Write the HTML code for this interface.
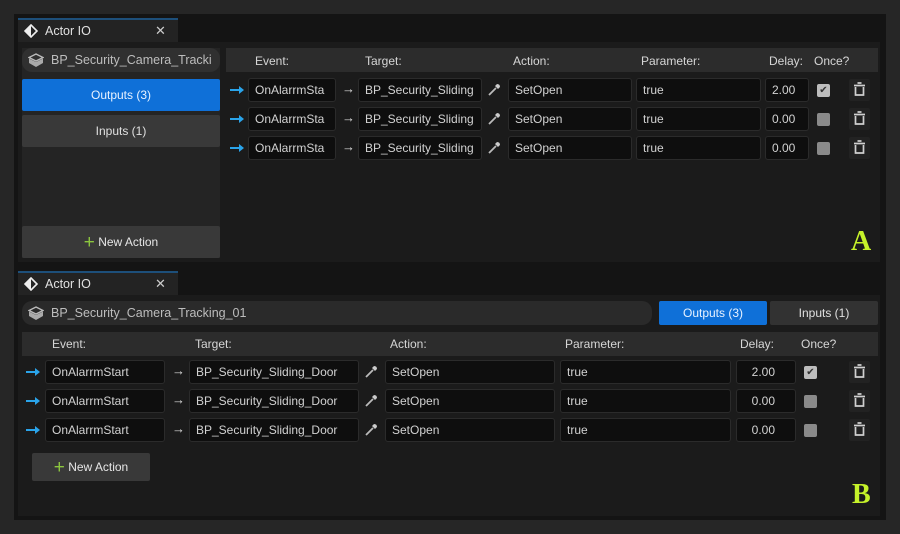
<!DOCTYPE html>
<html><head><meta charset="utf-8"><style>
*{margin:0;padding:0;box-sizing:border-box}
body{width:900px;height:534px;background:#262626;font-family:"Liberation Sans",sans-serif;position:relative;overflow:hidden;color:#d4d4d4}
.a{position:absolute}
.frame{left:14px;top:14px;width:872px;height:506px;background:#141414}
.tab{height:24px;width:160px;background:#232323;border-top:2px solid #1d4f7a;font-size:12.5px;color:#e0e0e0;line-height:22px;padding-left:27px}
.tab .x{position:absolute;left:137px;top:0;font-size:13px;color:#ccc}
.tab svg{position:absolute;left:6px;top:4px}
.panel{background:#1b1b1b}
.box{position:absolute;height:24px;background:#0e0e0e;border:1px solid #2b2b2b;border-radius:3px;color:#d2d2d2;font-size:12px;line-height:22px;padding-left:6px;white-space:nowrap;overflow:hidden}
.hdr{position:absolute;font-size:12px;color:#d6d6d6}
.btn{position:absolute;font-size:12px;text-align:center;border-radius:2px}
.chk{position:absolute;width:13px;height:13px;background:#8a8a8a;border-radius:2px}
.trash{position:absolute;width:21px;height:22px;background:#222;border-radius:2px}
.letter{position:absolute;font-family:"Liberation Serif",serif;font-weight:bold;font-size:28px;color:#c6f22a}
</style></head><body>
<div class="a frame"></div>

<!-- PANEL A -->
<div class="a tab" style="left:18px;top:18px">
<svg width="14" height="14" viewBox="0 0 14 14"><path d="M7 1L13 7L7 13L1 7Z" fill="none" stroke="#eee" stroke-width="1.6"/><path d="M7 1L1 7L7 13Z" fill="#eee"/></svg>Actor IO<span class="x">✕</span></div>
<div class="a panel" style="left:18px;top:42px;width:862px;height:220px"></div>
<div class="a" style="left:22px;top:48px;width:198px;height:210px;background:#242424"></div>
<div class="a" style="left:22px;top:48px;width:198px;height:24px;background:#303030;border-radius:10px;font-size:12.5px;color:#bdbdbd;line-height:24px;padding-left:29px;white-space:nowrap;overflow:hidden">BP_Security_Camera_Tracki</div>
<svg class="a" style="left:28px;top:53px" width="16" height="15" viewBox="0 0 16 15"><path d="M8 1L15 4.5L8 8L1 4.5Z" fill="none" stroke="#bbb" stroke-width="1.4"/><path d="M1 5.5V10L8 14V9Z M15 5.5V10L8 14V9Z" fill="#aaa"/></svg>
<div class="btn" style="left:22px;top:79px;width:198px;height:32px;line-height:32px;background:#0f70d8;color:#e8f2ff">Outputs (3)</div>
<div class="btn" style="left:22px;top:115px;width:198px;height:32px;line-height:32px;background:#393939;color:#e0e0e0">Inputs (1)</div>
<div class="btn" style="left:22px;top:226px;width:198px;height:32px;line-height:32px;background:#393939;color:#e6e6e6"><span style="color:#8cc63f;font-size:19px;vertical-align:-2px">+</span> New Action</div>

<div class="a" style="left:226px;top:48px;width:652px;height:24px;background:#2c2c2c"></div>
<div class="hdr" style="left:255px;top:54px">Event:</div>
<div class="hdr" style="left:365px;top:54px">Target:</div>
<div class="hdr" style="left:513px;top:54px">Action:</div>
<div class="hdr" style="left:641px;top:54px">Parameter:</div>
<div class="hdr" style="left:769px;top:54px">Delay:</div>
<div class="hdr" style="left:814px;top:54px">Once?</div>

<!-- rows A -->
<div id="ra"></div>

<div class="letter" style="left:851px;top:226px">A</div>

<!-- PANEL B -->
<div class="a tab" style="left:18px;top:271px">
<svg width="14" height="14" viewBox="0 0 14 14"><path d="M7 1L13 7L7 13L1 7Z" fill="none" stroke="#eee" stroke-width="1.6"/><path d="M7 1L1 7L7 13Z" fill="#eee"/></svg>Actor IO<span class="x">✕</span></div>
<div class="a panel" style="left:18px;top:295px;width:862px;height:221px"></div>
<div class="a" style="left:22px;top:301px;width:630px;height:24px;background:#2a2a2a;border-radius:10px;font-size:12.5px;color:#bdbdbd;line-height:24px;padding-left:29px">BP_Security_Camera_Tracking_01</div>
<svg class="a" style="left:28px;top:306px" width="16" height="15" viewBox="0 0 16 15"><path d="M8 1L15 4.5L8 8L1 4.5Z" fill="none" stroke="#bbb" stroke-width="1.4"/><path d="M1 5.5V10L8 14V9Z M15 5.5V10L8 14V9Z" fill="#aaa"/></svg>
<div class="btn" style="left:659px;top:301px;width:108px;height:24px;line-height:24px;background:#0f70d8;color:#e8f2ff">Outputs (3)</div>
<div class="btn" style="left:770px;top:301px;width:108px;height:24px;line-height:24px;background:#323232;color:#e0e0e0">Inputs (1)</div>
<div class="a" style="left:22px;top:332px;width:856px;height:24px;background:#2c2c2c"></div>
<div class="hdr" style="left:52px;top:337px">Event:</div>
<div class="hdr" style="left:195px;top:337px">Target:</div>
<div class="hdr" style="left:390px;top:337px">Action:</div>
<div class="hdr" style="left:565px;top:337px">Parameter:</div>
<div class="hdr" style="left:740px;top:337px">Delay:</div>
<div class="hdr" style="left:801px;top:337px">Once?</div>
<div id="rb"></div>
<div class="btn" style="left:32px;top:453px;width:118px;height:28px;line-height:28px;background:#393939;color:#e6e6e6"><span style="color:#8cc63f;font-size:19px;vertical-align:-2px">+</span> New Action</div>
<div class="letter" style="left:852px;top:479px">B</div>

<!-- Rows A -->
<div class="a" style="left:0;top:78px">
 <svg class="a" style="left:230px;top:7px" width="15" height="10"><path d="M0 5H11" stroke="#2aa4ea" stroke-width="2"/><path d="M9 1L14 5L9 9Z" fill="#2aa4ea"/></svg>
 <div class="box" style="left:248px;width:88px">OnAlarrmSta</div>
 <div class="a" style="left:342px;top:3px;font-size:13px;color:#ddd">→</div>
 <div class="box" style="left:358px;width:124px">BP_Security_Sliding</div>
 <svg class="a" style="left:487px;top:5px" width="14" height="14"><path d="M2 12L9 5" stroke="#bbb" stroke-width="1.8"/><path d="M8 3L11 6L13 4Q13 1 10 1Z" fill="#ccc"/></svg>
 <div class="box" style="left:508px;width:124px">SetOpen</div>
 <div class="box" style="left:636px;width:125px">true</div>
 <div class="box" style="left:765px;width:44px">2.00</div>
 <div class="chk" style="left:817px;top:6px;background:#bdbdbd;color:#333;font-size:10px;line-height:13px;text-align:center">✔</div>
 <div class="trash" style="left:849px;top:1px"><svg width="21" height="22"><path d="M8.5 4H12.5M5 6.5H16M6.5 8V16H14.5V8" fill="none" stroke="#d0d0d0" stroke-width="1.7"/></svg></div>
</div>
<div class="a" style="left:0;top:107px">
 <svg class="a" style="left:230px;top:7px" width="15" height="10"><path d="M0 5H11" stroke="#2aa4ea" stroke-width="2"/><path d="M9 1L14 5L9 9Z" fill="#2aa4ea"/></svg>
 <div class="box" style="left:248px;width:88px">OnAlarrmSta</div>
 <div class="a" style="left:342px;top:3px;font-size:13px;color:#ddd">→</div>
 <div class="box" style="left:358px;width:124px">BP_Security_Sliding</div>
 <svg class="a" style="left:487px;top:5px" width="14" height="14"><path d="M2 12L9 5" stroke="#bbb" stroke-width="1.8"/><path d="M8 3L11 6L13 4Q13 1 10 1Z" fill="#ccc"/></svg>
 <div class="box" style="left:508px;width:124px">SetOpen</div>
 <div class="box" style="left:636px;width:125px">true</div>
 <div class="box" style="left:765px;width:44px">0.00</div>
 <div class="chk" style="left:817px;top:6px"></div>
 <div class="trash" style="left:849px;top:1px"><svg width="21" height="22"><path d="M8.5 4H12.5M5 6.5H16M6.5 8V16H14.5V8" fill="none" stroke="#d0d0d0" stroke-width="1.7"/></svg></div>
</div>
<div class="a" style="left:0;top:136px">
 <svg class="a" style="left:230px;top:7px" width="15" height="10"><path d="M0 5H11" stroke="#2aa4ea" stroke-width="2"/><path d="M9 1L14 5L9 9Z" fill="#2aa4ea"/></svg>
 <div class="box" style="left:248px;width:88px">OnAlarrmSta</div>
 <div class="a" style="left:342px;top:3px;font-size:13px;color:#ddd">→</div>
 <div class="box" style="left:358px;width:124px">BP_Security_Sliding</div>
 <svg class="a" style="left:487px;top:5px" width="14" height="14"><path d="M2 12L9 5" stroke="#bbb" stroke-width="1.8"/><path d="M8 3L11 6L13 4Q13 1 10 1Z" fill="#ccc"/></svg>
 <div class="box" style="left:508px;width:124px">SetOpen</div>
 <div class="box" style="left:636px;width:125px">true</div>
 <div class="box" style="left:765px;width:44px">0.00</div>
 <div class="chk" style="left:817px;top:6px"></div>
 <div class="trash" style="left:849px;top:1px"><svg width="21" height="22"><path d="M8.5 4H12.5M5 6.5H16M6.5 8V16H14.5V8" fill="none" stroke="#d0d0d0" stroke-width="1.7"/></svg></div>
</div>

<!-- Rows B -->
<div class="a" style="left:0;top:360px">
 <svg class="a" style="left:26px;top:7px" width="15" height="10"><path d="M0 5H11" stroke="#2aa4ea" stroke-width="2"/><path d="M9 1L14 5L9 9Z" fill="#2aa4ea"/></svg>
 <div class="box" style="left:45px;width:120px">OnAlarrmStart</div>
 <div class="a" style="left:172px;top:3px;font-size:13px;color:#ddd">→</div>
 <div class="box" style="left:189px;width:170px">BP_Security_Sliding_Door</div>
 <svg class="a" style="left:364px;top:5px" width="14" height="14"><path d="M2 12L9 5" stroke="#bbb" stroke-width="1.8"/><path d="M8 3L11 6L13 4Q13 1 10 1Z" fill="#ccc"/></svg>
 <div class="box" style="left:385px;width:170px">SetOpen</div>
 <div class="box" style="left:560px;width:171px">true</div>
 <div class="box" style="left:736px;width:60px;text-align:right;padding-right:20px">2.00</div>
 <div class="chk" style="left:804px;top:6px;background:#bdbdbd;color:#333;font-size:10px;line-height:13px;text-align:center">✔</div>
 <div class="trash" style="left:849px;top:1px"><svg width="21" height="22"><path d="M8.5 4H12.5M5 6.5H16M6.5 8V16H14.5V8" fill="none" stroke="#d0d0d0" stroke-width="1.7"/></svg></div>
</div>
<div class="a" style="left:0;top:389px">
 <svg class="a" style="left:26px;top:7px" width="15" height="10"><path d="M0 5H11" stroke="#2aa4ea" stroke-width="2"/><path d="M9 1L14 5L9 9Z" fill="#2aa4ea"/></svg>
 <div class="box" style="left:45px;width:120px">OnAlarrmStart</div>
 <div class="a" style="left:172px;top:3px;font-size:13px;color:#ddd">→</div>
 <div class="box" style="left:189px;width:170px">BP_Security_Sliding_Door</div>
 <svg class="a" style="left:364px;top:5px" width="14" height="14"><path d="M2 12L9 5" stroke="#bbb" stroke-width="1.8"/><path d="M8 3L11 6L13 4Q13 1 10 1Z" fill="#ccc"/></svg>
 <div class="box" style="left:385px;width:170px">SetOpen</div>
 <div class="box" style="left:560px;width:171px">true</div>
 <div class="box" style="left:736px;width:60px;text-align:right;padding-right:20px">0.00</div>
 <div class="chk" style="left:804px;top:6px"></div>
 <div class="trash" style="left:849px;top:1px"><svg width="21" height="22"><path d="M8.5 4H12.5M5 6.5H16M6.5 8V16H14.5V8" fill="none" stroke="#d0d0d0" stroke-width="1.7"/></svg></div>
</div>
<div class="a" style="left:0;top:418px">
 <svg class="a" style="left:26px;top:7px" width="15" height="10"><path d="M0 5H11" stroke="#2aa4ea" stroke-width="2"/><path d="M9 1L14 5L9 9Z" fill="#2aa4ea"/></svg>
 <div class="box" style="left:45px;width:120px">OnAlarrmStart</div>
 <div class="a" style="left:172px;top:3px;font-size:13px;color:#ddd">→</div>
 <div class="box" style="left:189px;width:170px">BP_Security_Sliding_Door</div>
 <svg class="a" style="left:364px;top:5px" width="14" height="14"><path d="M2 12L9 5" stroke="#bbb" stroke-width="1.8"/><path d="M8 3L11 6L13 4Q13 1 10 1Z" fill="#ccc"/></svg>
 <div class="box" style="left:385px;width:170px">SetOpen</div>
 <div class="box" style="left:560px;width:171px">true</div>
 <div class="box" style="left:736px;width:60px;text-align:right;padding-right:20px">0.00</div>
 <div class="chk" style="left:804px;top:6px"></div>
 <div class="trash" style="left:849px;top:1px"><svg width="21" height="22"><path d="M8.5 4H12.5M5 6.5H16M6.5 8V16H14.5V8" fill="none" stroke="#d0d0d0" stroke-width="1.7"/></svg></div>
</div>
</body></html>
